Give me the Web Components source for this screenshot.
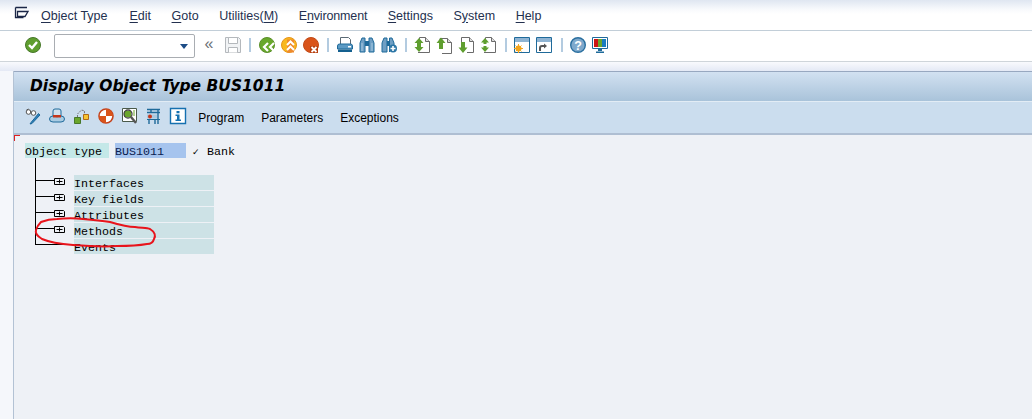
<!DOCTYPE html>
<html>
<head>
<meta charset="utf-8">
<style>
  html, body { margin: 0; height: 100%; overflow: hidden; background: #fff; }
  body { display: flex; flex-direction: column; height: 419px; }
</style>
</head>
<body>
<sap-menubar>
  <sap-menu label="Object Type" key="O" style="margin-right:1.500px"></sap-menu>
  <sap-menu label="Edit" key="E"></sap-menu>
  <sap-menu label="Goto" key="G"></sap-menu>
  <sap-menu label="Utilities(M)" key="M"></sap-menu>
  <sap-menu label="Environment" key="n" style="letter-spacing:-.15px"></sap-menu>
  <sap-menu label="Settings" key="S"></sap-menu>
  <sap-menu label="System" key="y"></sap-menu>
  <sap-menu label="Help" key="H"></sap-menu>
</sap-menubar>
<sap-toolbar></sap-toolbar>
<sap-panel title-text="Display Object Type BUS1011">
  <sap-tree></sap-tree>
</sap-panel>

<script>
const ICONS = {
  check: `<circle cx="8" cy="8" r="7.5" fill="#5f9e2f" stroke="#47782a"/><path d="M4 8l3 3 5-6" fill="none" stroke="#fff" stroke-width="2.4"/>`,
  save: `<path d="M.5.5h13l2 2v13H.5z" fill="#f1f3f5" stroke="#b4b8bc"/><path d="M3.5.5h9v6h-9zM3.5 15.5v-5h9v5" fill="#fff" stroke="#b4b8bc"/>`,
  back: `<circle cx="8" cy="8" r="7.5" fill="#69a82c" stroke="#5a8f2a"/><path d="M9 6l-4 4 4 4M15 6l-4 4 4 4" fill="none" stroke="#fff" stroke-width="2.2"/>`,
  up: `<circle cx="8" cy="8" r="7.5" fill="#f8b81e" stroke="#e6931a"/><path d="M6 2.5h7v13H6z" fill="#ee8a2c"/><path d="M6 8l3.5-3.5L13 8M6 13l3.5-3.5L13 13" fill="none" stroke="#fff" stroke-width="2"/>`,
  cancel: `<circle cx="8" cy="8" r="7.5" fill="#d9541a" stroke="#c24a16"/><path d="M7 9h8v7H7z" fill="#b8400f"/><path d="M8.500 10l5 5M13.500 10l-5 5" stroke="#fff" stroke-width="1.800"/>`,
  print: `<path d="M3.5 7V.5h8l2 2V7" fill="#fff" stroke="#5b6a75"/><path d="M.5 9q0-2 2-2h11q2 0 2 2v3h-15z" fill="#5b9ac4" stroke="#1f6a9a"/><path d="M1 12.5h14V15H1z" fill="#14608f"/><path d="M11 9h3v1.5h-3z" fill="#fff"/>`,
  find: `<path d="M1 15V6l2-5h3v14zM15 15V6l-2-5h-3v14z" fill="#6f9fc4" stroke="#1f6a9a"/><path d="M6 4h4v5H6z" fill="#1f6a9a"/><path d="M3 6v8M13 6v8" stroke="#a9cbe2"/>`,
  findnext: `<path d="M1 15V6l2-5h3v14zM13 10V6l-2-5H8.500v14" fill="#6f9fc4" stroke="#1f6a9a"/><path d="M6 4h3v5H6z" fill="#1f6a9a"/><circle cx="12" cy="11.500" r="4" fill="#2c76a6"/><path d="M12 9v5M9.500 11.500h5" stroke="#fff" stroke-width="1.600"/>`,
  first: `<path d="M5.500 2.500V.5h6l4 4v11H4" fill="#fff" stroke="#6b6b6b"/><path d="M11.500.5v4h4" fill="#ddd" stroke="#6b6b6b"/><path d="M5 1L.5 6H3v2h4V6h2.500zM5 15L.5 10H3V8h4v2h2.500z" fill="#5f9e2f"/>`,
  prev: `<path d="M4 5.500V.5h7.500l4 4v11H6" fill="#fff" stroke="#6b6b6b" transform="translate(0 1)"/><path d="M11.500 1.500v4h4" fill="#ddd" stroke="#6b6b6b"/><path d="M5 .5L.5 6H3v6h4V6h2.500z" fill="#5f9e2f"/>`,
  next: `<path d="M3.500 10V.5h8l4 4v11H9" fill="#fff" stroke="#6b6b6b"/><path d="M11.500.5v4h4" fill="#ddd" stroke="#6b6b6b"/><path d="M5 16L.5 10.500H3V5h4v5.500h2.500z" fill="#5f9e2f"/>`,
  last: `<path d="M5.500 2.500V.5h6l4 4v11H4" fill="#fff" stroke="#6b6b6b"/><path d="M11.500.5v4h4" fill="#ddd" stroke="#6b6b6b"/><path d="M5 1L1 5.500h2.500V7h3V5.500H9zM5 15l-4-4.500h2.500V9h3v1.500H9z" fill="#5f9e2f"/>`,
  sess: `<path d="M.5.5h15v15H.5z" fill="#fff" stroke="#1f6a9a"/><path d="M1 1h14v4H1z" fill="#8fb4d3"/><path d="M4.500 7v9M0 11.500h9M1.500 8.500l6 6M7.500 8.500l-6 6" stroke="#f3a51c"/><circle cx="4.500" cy="11.500" r="3" fill="#f3a51c"/>`,
  shortcut: `<path d="M.5.5h15v15H.5z" fill="#fff" stroke="#1f6a9a"/><path d="M1 1h14v4H1z" fill="#8fb4d3"/><path d="M4 14v-3q0-2 2-2h3" fill="none" stroke="#555" stroke-width="2"/><path d="M8 6.500l3 2.500-3 2.500z" fill="#555"/>`,
  help: `<circle cx="8" cy="8" r="7.300" fill="#7fa9cc" stroke="#2a6f9f" stroke-width="1.400"/><text x="8" y="12.500" text-anchor="middle" font-family="Liberation Sans" font-weight="700" font-size="12.500" fill="#fff">?</text>`,
  monitor: `<path d="M.5.5h15v11H.5z" fill="#fff" stroke="#1f6a9a"/><path d="M2 2h4v8H2z" fill="#cc1414"/><path d="M6 2h4v8H6z" fill="#6aa62c"/><path d="M10 2h4v8h-4z" fill="#1a7cc0"/><path d="M6 12h4v2H6zM4 14.500h8v1.500H4z" fill="#1f6a9a"/>`,
  display: `<circle cx="3.500" cy="4" r="2.300" fill="#fff" stroke="#555"/><circle cx="8.500" cy="5" r="2.300" fill="#fff" stroke="#555"/><path d="M1.500 2l2-1M6 4l-1-.5" stroke="#555"/><path d="M6 14.500l-1 1.500 2-.5 8-8.500-1.500-1.500z" fill="#2f7fb8" stroke="#1f6a9a"/>`,
  hat: `<path d="M4 9V3q0-2 2-2h4q2 0 2 2v6" fill="#cfe0ee" stroke="#1f6a9a"/><path d="M.500 11q0-3 3.500-3 4 1.500 8 0 3.500 0 3.500 3 0 3-3.500 3H4Q.5 14 .5 11z" fill="#a9cbe2" stroke="#1f6a9a"/><path d="M4 7h8v2.500H4z" fill="#c4361c"/>`,
  where: `<path d="M1.500 9.500h6v6h-6z" fill="#6aa62c" stroke="#47782a"/><path d="M10.500 6.500h5v5h-5z" fill="#f8c431" stroke="#b06a16"/><path d="M4.500 9V6l4-4 3 1v3" fill="none" stroke="#777" stroke-dasharray="2 1"/>`,
  test: `<circle cx="8" cy="8" r="7" fill="#fff" stroke="#c4421c" stroke-width="1.600"/><path d="M8 1a7 7 0 0 1 7 7H8zM8 8H1a7 7 0 0 0 7 7z" fill="#d9541a"/>`,
  trace: `<path d="M.5.5h14v13H.5z" fill="#fff" stroke="#4a5a4a"/><path d="M2 3h7v6H2z" fill="#6aa62c"/><circle cx="6" cy="6" r="4" fill="none" stroke="#444" stroke-width="1.300"/><path d="M9 9l5 6" stroke="#555" stroke-width="2.400"/><path d="M11 3h2M11 5h2M11 7h2" stroke="#6aa62c"/>`,
  config: `<path d="M1 1.500h13M1 4.500h13" stroke="#1f6a9a" stroke-width="1.600"/><path d="M5 1v4M12 1v15M3 16v-5M9 11v5" stroke="#1f6a9a" stroke-width="1.400"/><path d="M1 6.500h10v4H1z" fill="#a9c8e0"/><circle cx="4" cy="8.500" r="2" fill="#c4361c"/><path d="M1 11.500h13" stroke="#1f6a9a"/>`,
  info: `<path d="M.5.5h15v15H.5z" fill="#fff" stroke="#1570b0" stroke-width="1.400"/><path d="M6.500 3h3v2.200h-3zM5.500 6.500h4v5h1.500V13H5.500v-1.500H7v-3.500H5.500z" fill="#1570b0"/>`,
  plusbox: `<path d="M.5.500h9l1 1v5h-10z" fill="none" stroke="#000"/><path d="M2.500 3.500h6M5.500 1.500v4" stroke="#000"/>`
};

class SapIcon extends HTMLElement {
  constructor() {
    super();
    const name = this.getAttribute('name');
    this.attachShadow({ mode: 'open' }).innerHTML = `
      <style>
        :host { display: block; width: 16px; height: 16px; flex: none; }
        svg { display: block; overflow: visible; }
      </style>
      <svg width="16" height="16" viewBox="0 0 16 16">${ICONS[name]}</svg>`;
  }
}
customElements.define('sap-icon', SapIcon);

class SapMenu extends HTMLElement {
  constructor() {
    super();
    const label = this.getAttribute('label');
    const key = this.getAttribute('key');
    const i = label.indexOf(key);
    this.attachShadow({ mode: 'open' }).innerHTML = `
      <style>
        :host { display: block; white-space: nowrap; padding-top: 1px; }
        u { text-underline-offset: 2px; }
      </style>
      ${label.slice(0, i)}<u>${key}</u>${label.slice(i + 1)}`;
  }
}
customElements.define('sap-menu', SapMenu);

class SapMenubar extends HTMLElement {
  constructor() {
    super();
    this.attachShadow({ mode: 'open' }).innerHTML = `
      <style>
        :host {
          display: flex; align-items: center; flex: none; box-sizing: border-box;
          height: 31px; padding: 0 0 0 14px;
          background: linear-gradient(#dfe6f1, #f7f9fc 9px, #fff 14px);
          border-bottom: 1px solid #c2ced8;
          font: 12.500px "Liberation Sans", sans-serif; color: #23304f;
        }
        svg { flex: none; margin: -5px 11px 0 0; }
        .items { display: flex; gap: 20.500px; }
      </style>
      <svg width="16" height="14" viewBox="0 0 16 14" fill="none" stroke="#1b2747" stroke-width="1.300">
        <path d="M1.500 1.500h11.500M1.500 1.500v10h8M3.500 5.500h10.500l-3 5H3.500z"/>
      </svg>
      <div class="items"><slot></slot></div>`;
  }
}
customElements.define('sap-menubar', SapMenubar);

class SapToolbar extends HTMLElement {
  constructor() {
    super();
    const group = (names) => names.map(n => `<sap-icon name="${n}"></sap-icon>`).join('');
    this.attachShadow({ mode: 'open' }).innerHTML = `
      <style>
        :host {
          display: flex; align-items: center; flex: none; box-sizing: border-box;
          height: 31px; padding: 0 0 0 25px; background: #fff;
          border-bottom: 1px solid #cfd5da;
        }
        sap-icon { margin-top: -2px; }
        .field {
          box-sizing: border-box; width: 141px; height: 24px; margin: 0 8px 0 13px;
          border: 1px solid #a9adb2; border-radius: 2px; background: #fff;
          display: flex; align-items: center; justify-content: flex-end; padding-right: 6px;
        }
        .field i { width: 0; height: 0; border: 4.500px solid transparent; border-top: 5px solid #1c4c86; border-bottom: 0; }
        .chev { width: 12px; margin-right: 10px; font: 16px/16px "Liberation Sans", sans-serif; color: #6b7075; text-align: center; margin-top: -4px; }
        .g { display: flex; gap: 6px; }
        .sep { width: 2px; height: 14px; background: #b3cbe0; margin: -2px 8px 0 8px; flex: none; }
      </style>
      <sap-icon name="check"></sap-icon>
      <div class="field"><i></i></div>
      <div class="chev">«</div>
      <sap-icon name="save"></sap-icon>
      <div class="sep"></div>
      <div class="g">${group(['back', 'up', 'cancel'])}</div>
      <div class="sep"></div>
      <div class="g">${group(['print', 'find', 'findnext'])}</div>
      <div class="sep" style="margin-right:7px"></div>
      <div class="g">${group(['first', 'prev', 'next', 'last'])}</div>
      <div class="sep" style="margin-left:9px;margin-right:7px"></div>
      <div class="g">${group(['sess', 'shortcut'])}</div>
      <div class="sep" style="margin-left:9px;margin-right:7px"></div>
      <div class="g">${group(['help', 'monitor'])}</div>`;
  }
}
customElements.define('sap-toolbar', SapToolbar);

class SapPanel extends HTMLElement {
  constructor() {
    super();
    const tools = ['display', 'hat', 'where', 'test', 'trace', 'config', 'info'];
    this.attachShadow({ mode: 'open' }).innerHTML = `
      <style>
        :host {
          display: flex; flex-direction: column; flex: 1; min-height: 0;
          padding: 9px 0 0 13px;
          background: linear-gradient(#f9fafd, #e4e9f5 9px, #f5f7fb 9px);
        }
        .frame { flex: 1; display: flex; flex-direction: column; background: #eef1f6; border-left: 1px solid #b3c2d4; min-height: 0; }
        .title {
          box-sizing: border-box; height: 31px; padding: 0 0 2px 16px; display: flex; align-items: center;
          background: linear-gradient(#d2e1f1, #a9c3da);
          border-top: 1px solid #98a8c0; border-bottom: 1px solid #e2ecf5;
          font: italic bold 15.500px "DejaVu Sans", "Liberation Sans", sans-serif; color: #000;
          white-space: nowrap;
        }
        .apps {
          box-sizing: border-box; height: 33px; padding: 0 0 0 11px; display: flex; align-items: center; flex: none;
          background: #cbddee; border-bottom: 2px solid #aebed2;
          font: 12px "Liberation Sans", sans-serif; color: #000;
        }
        .icons { display: flex; gap: 8.200px; margin-right: 12px; }
        .icons sap-icon { margin-top: -3px; }
        .btns { display: flex; gap: 17px; }
        .body { flex: 1; position: relative; min-height: 0; }
        .mark { position: absolute; left: 0; top: 0; width: 5px; height: 5px; border-left: 1px solid #e02020; border-top: 1px solid #e02020; }
      </style>
      <div class="frame">
        <div class="title">${this.getAttribute('title-text')}</div>
        <div class="apps">
          <div class="icons">${tools.map(n => `<sap-icon name="${n}"></sap-icon>`).join('')}</div>
          <div class="btns"><span>Program</span><span>Parameters</span><span>Exceptions</span></div>
        </div>
        <div class="body"><div class="mark"></div><slot></slot></div>
      </div>`;
  }
}
customElements.define('sap-panel', SapPanel);

class SapTree extends HTMLElement {
  constructor() {
    super();
    const rows = ['Interfaces', 'Key fields', 'Attributes', 'Methods', 'Events'];
    this.attachShadow({ mode: 'open' }).innerHTML = `
      <style>
        :host {
          display: block; position: relative; height: 100%; box-sizing: border-box;
          padding: 8px 0 0 11px;
          font: 11.670px/15px "Liberation Mono", monospace; color: #000;
        }
        .head { display: flex; align-items: flex-start; height: 15px; white-space: pre; }
        .head span { box-sizing: border-box; height: 15px; padding-top: 2px; }
        .lbl { width: 84px; background: #c4e8e8; }
        .val { width: 71px; margin-left: 6px; background: #a6c4ee; color: #0a2050; }
        .head .chk { margin-left: 6px; font-family: "DejaVu Sans", sans-serif; font-size: 9px; width: 15px; }
        .rows { margin: 17px 0 0 10px; display: flex; flex-direction: column; gap: 1px; position: relative; width: 179px; }
        .rows::before { content: ""; position: absolute; left: 0; top: -17px; height: 87px; width: 1px; background: #000; }
        .row { display: flex; height: 15px; align-items: flex-start; }
        .tick { width: 19px; height: 1px; background: #000; margin-top: 5px; flex: none; }
        .row:last-child .tick { width: 39px; }
        .box { width: 12px; margin: 3px 8px 0 0; flex: none; height: 7px; }
        .box svg { display: block; }
        .txt { flex: 1; box-sizing: border-box; background: #cde2e6; height: 15px; padding-top: 2px; white-space: pre; }
        .circle { position: absolute; left: 0; top: 0; pointer-events: none; overflow: visible; }
      </style>
      <div class="head">
        <span class="lbl">Object type</span><span class="val">BUS1011</span><span class="chk">✓</span><span>Bank</span>
      </div>
      <div class="rows">
        ${rows.map((r, i) => `<div class="row"><span class="tick"></span>${i < 4
          ? `<span class="box"><svg width="12" height="7" viewBox="0 0 12 7">${ICONS.plusbox}</svg></span>`
          : ''}<span class="txt">${r}</span></div>`).join('')}
      </div>
      <svg class="circle" width="200" height="140">
        <path d="M69 84C82 85 90 86 96 87C106 90 114 92 121 92C128 93 133 93 136 94C141 97 142 101 140 104C139 108 137 109 133 109C122 111 112 111 103 111C88 112 72 111 59 110C46 109 35 107 28 104C23 101 21 98 22 95C23 91 25 89 27 87C32 85 37 84 43 84C52 83 61 83 69 84Z"
          fill="none" stroke="#e8141c" stroke-width="2"/>
      </svg>`;
  }
}
customElements.define('sap-tree', SapTree);
</script>
</body>
</html>
